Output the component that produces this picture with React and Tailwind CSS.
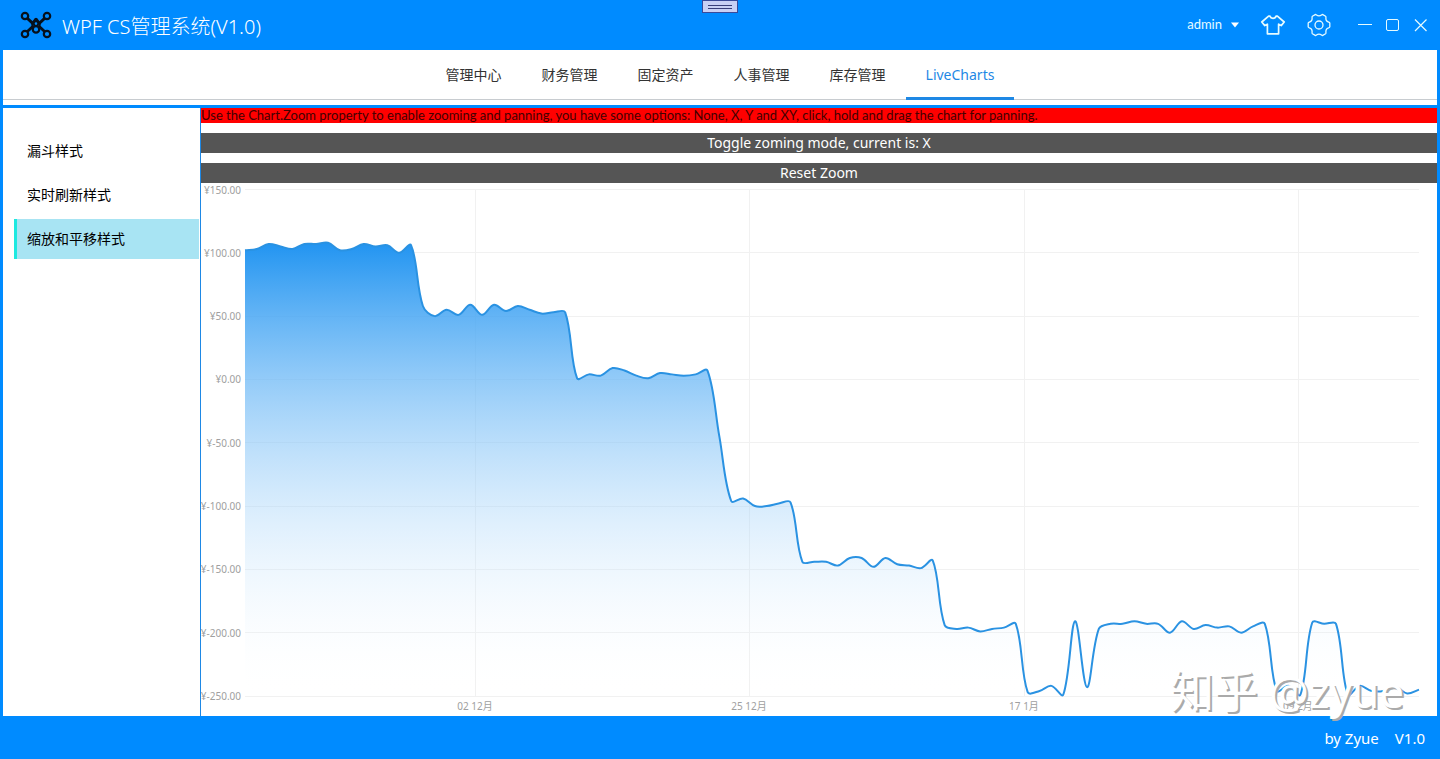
const navItems = ['管理中心', '财务管理', '固定资产', '人事管理', '库存管理', 'LiveCharts']

const sideItems = ['漏斗样式', '实时刷新样式', '缩放和平移样式']

const values = [
  102, 103, 107, 105, 103, 107, 107, 108, 102, 103, 107, 105, 106, 100, 106,
  58, 50, 55, 51, 59, 51, 59, 54, 58, 55, 52, 53, 53, 1, 4, 3, 9, 7, 3, 1, 5,
  4, 3, 4, 7, -45, -96, -94, -100, -100, -98, -97, -144, -144, -144, -147,
  -141, -141, -148, -141, -146, -147, -149, -143, -194, -197, -196, -199, -197,
  -196, -193, -247, -246, -242, -249, -191, -243, -197, -193, -193, -191, -193,
  -193, -200, -191, -197, -194, -196, -195, -200, -195, -193, -246, -242, -249,
  -192, -193, -193, -249, -242, -246, -246, -243, -248, -245,
]

const yTicks = [150, 100, 50, 0, -50, -100, -150, -200, -250]

const xTicks = [
  { x: 274, label: '02 12月' },
  { x: 548, label: '25 12月' },
  { x: 823, label: '17 1月' },
  { x: 1097, label: '09 2月' },
]

const plot = { left: 44, right: 1218, top: 6.5, bottom: 513 }
const smoothness = 0.7

const scaleX = (index) =>
  plot.left + (index * (plot.right - plot.left)) / (values.length - 1)

const scaleY = (value) =>
  plot.top + ((150 - value) * (plot.bottom - plot.top)) / 400

// Control points on both sides of p1, weighted by the segment lengths
function getControls(p0, p1, p2) {
  const c1 = [(p0[0] + p1[0]) / 2, (p0[1] + p1[1]) / 2]
  const c2 = [(p1[0] + p2[0]) / 2, (p1[1] + p2[1]) / 2]
  const len1 = Math.hypot(p1[0] - p0[0], p1[1] - p0[1])
  const len2 = Math.hypot(p2[0] - p1[0], p2[1] - p1[1])
  const k = len1 + len2 === 0 ? 0 : len1 / (len1 + len2)
  const mid = [c1[0] + (c2[0] - c1[0]) * k, c1[1] + (c2[1] - c1[1]) * k]

  return {
    before: [0, 1].map((a) => p1[a] + (c1[a] - mid[a]) * smoothness),
    after: [0, 1].map((a) => p1[a] + (c2[a] - mid[a]) * smoothness),
  }
}

function buildLine() {
  const points = values.map((value, index) => [scaleX(index), scaleY(value)])
  const controls = points.map((point, index) =>
    getControls(points[index - 1] ?? point, point, points[index + 1] ?? point)
  )

  return points
    .map((point, index) => {
      if (index === 0) {
        return `M${point.join(' ')}`
      }

      const { after } = controls[index - 1]
      const { before } = controls[index]
      return `C${after.join(' ')} ${before.join(' ')} ${point.join(' ')}`
    })
    .join('')
}

const linePath = buildLine()
const areaPath = `${linePath}V${plot.bottom}H${plot.left}Z`

function Logo() {
  return (
    <svg viewBox="0 0 32 28" className="h-7 w-8 shrink-0" fill="none" stroke="#06101c" strokeWidth="2.2">
      <circle cx="5" cy="5" r="3.2" />
      <circle cx="27" cy="5" r="3.2" />
      <circle cx="5" cy="23" r="3.2" />
      <circle cx="27" cy="23" r="3.2" />
      <path d="M7.4 7.4 13 12.6M24.6 7.4 19 12.6M7.4 20.6 13 15.2M24.6 20.6 19 15.2" strokeWidth="2.8" />
      <path d="M16 7.4 12.2 12.4 12.8 15.6M16 7.4 19.8 12.4 19.2 15.6" strokeLinejoin="round" />
      <circle cx="16" cy="12.6" r="2.2" strokeWidth="1.8" />
      <circle cx="16" cy="18.4" r="3.2" />
    </svg>
  )
}

function ShirtIcon() {
  return (
    <svg viewBox="0 0 26 22" className="h-[22px] w-[26px]" fill="none" stroke="currentColor" strokeWidth="1.7" strokeLinejoin="round">
      <path d="M8.6 2.2 1.8 8 4.8 11.6 7.4 10.2V19.8H18.6V10.2L21.2 11.6 24.2 8 17.4 2.2H16C15.2 5 10.8 5 10 2.2Z" />
    </svg>
  )
}

function GearIcon() {
  return (
    <svg viewBox="0 0 24 24" className="size-6" fill="none" stroke="currentColor" strokeWidth="1.3" strokeLinejoin="round">
      <path d="M8.2 1.6C9.2 1 9.6 2.9 12 2.9S14.8 1 15.8 1.6L18.6 3.2C19.6 3.9 18.2 5.2 19.3 7.4S22.6 8.8 22.8 10V14C22.6 15.2 20.4 14.5 19.3 16.6S19.6 20.1 18.6 20.8L15.8 22.4C14.8 23 14.4 21.1 12 21.1S9.2 23 8.2 22.4L5.4 20.8C4.4 20.1 5.8 18.8 4.7 16.6S1.4 15.2 1.2 14V10C1.4 8.8 3.6 9.5 4.7 7.4S4.4 3.9 5.4 3.2Z" />
      <circle cx="12" cy="12" r="4" />
    </svg>
  )
}

function TitleBar() {
  return (
    <header className="relative flex h-[50px] items-center justify-between pr-[11px] pl-5 text-white">
      <div className="flex items-center gap-2.5">
        <Logo />
        <h1 className="pt-1 text-xl font-light">WPF CS管理系统(V1.0)</h1>
      </div>

      <div className="absolute top-0 left-1/2 flex h-[13px] w-9 -translate-x-1/2 flex-col justify-center gap-[2px] border border-[#3a4a9a] bg-[#c9d0f5] px-[5px]">
        <span className="h-px bg-[#3a3f7a]" />
        <span className="h-px bg-[#3a3f7a]" />
      </div>

      <div className="flex items-center text-[#e6fbff]">
        <button type="button" className="flex items-center gap-2 font-['Lato',sans-serif] text-[13px]">
          admin
          <svg viewBox="0 0 10 6" className="h-1.5 w-2.5" fill="#fff">
            <path d="M1 .5H9L5 5.5Z" />
          </svg>
        </button>
        <button type="button" aria-label="Theme" className="ml-5">
          <ShirtIcon />
        </button>
        <button type="button" aria-label="Settings" className="ml-[21px]">
          <GearIcon />
        </button>
        <div className="ml-[26px] flex gap-3">
          <button type="button" aria-label="Minimize">
            <svg viewBox="0 0 16 16" className="size-4" stroke="currentColor">
              <path d="M1 7.5H15" />
            </svg>
          </button>
          <button type="button" aria-label="Maximize">
            <svg viewBox="0 0 16 16" className="size-4" fill="none" stroke="currentColor">
              <rect x="1.5" y="2.5" width="12" height="11" rx="1.5" />
            </svg>
          </button>
          <button type="button" aria-label="Close">
            <svg viewBox="0 0 16 16" className="size-4" stroke="currentColor" strokeWidth="1.2">
              <path d="M2 2.5 13.5 14M13.5 2.5 2 14" />
            </svg>
          </button>
        </div>
      </div>
    </header>
  )
}

function NavBar() {
  return (
    <nav className="h-[55px] bg-white">
      <div className="flex h-[50px] justify-center border-b border-[#c8ccd0]">
        {navItems.map((item) => (
          <button
            key={item}
            type="button"
            className={`-mb-px h-[50px] border-b-3 px-5 pt-0.5 text-sm ${
              item === 'LiveCharts'
                ? 'border-[#1e88e5] text-[#1e88e5]'
                : 'border-transparent text-[#333]'
            }`}
          >
            {item}
          </button>
        ))}
      </div>
    </nav>
  )
}

function Sidebar() {
  return (
    <aside className="w-[198px] shrink-0 border-r border-[#1e88e5] pt-[23px] pr-px pl-[11px]">
      {sideItems.map((item, index) => (
        <button
          key={item}
          type="button"
          className={`mb-1 flex h-10 w-full items-center border-l-3 pl-2.5 text-sm text-black ${
            index === 2 ? 'border-[#1de9e0] bg-[#a8e4f3]' : 'border-transparent'
          }`}
        >
          {item}
        </button>
      ))}
    </aside>
  )
}

function Chart() {
  return (
    <svg viewBox="0 0 1236 533" className="block w-full">
      <defs>
        <linearGradient id="area" x1="0" y1="0" x2="0" y2="1">
          <stop offset="0" stopColor="#2194f1" />
          <stop offset="1" stopColor="#fff" stopOpacity="0" />
        </linearGradient>
      </defs>
      <g stroke="#f1f1f1">
        {yTicks.map((tick) => (
          <path key={tick} d={`M${plot.left} ${Math.floor(scaleY(tick)) + 0.5}H${plot.right}`} />
        ))}
        {xTicks.map((tick) => (
          <path key={tick.x} d={`M${tick.x + 0.5} ${plot.top}V${plot.bottom}`} />
        ))}
      </g>
      <path d={areaPath} fill="url(#area)" />
      <path d={linePath} fill="none" stroke="#2a92e2" strokeWidth="2" />
      <g className="fill-[#a0a0a0] text-[10px]">
        {yTicks.map((tick) => (
          <text key={tick} x="40" y={scaleY(tick) + 4} textAnchor="end">
            ¥{tick.toFixed(2)}
          </text>
        ))}
        {xTicks.map((tick) => (
          <text key={tick.x} x={tick.x} y="527" textAnchor="middle">
            {tick.label}
          </text>
        ))}
      </g>
    </svg>
  )
}

export default function App() {
  return (
    <div className="relative flex min-h-screen flex-col bg-[#008bff] font-['Noto_Sans','Noto_Sans_CJK_SC',sans-serif]">
      <TitleBar />
      <div className="mx-[3px] flex flex-1 flex-col">
        <NavBar />
        <div className="mt-[3px] flex flex-1 bg-white">
          <Sidebar />
          <main className="min-w-0 flex-1">
            <p className="h-[15px] bg-[#ff0000] font-['Lato',sans-serif] text-[13px] leading-[15px] text-[#400]">
              Use the Chart.Zoom property to enable zooming and panning, you have some options: None, X, Y and XY, click, hold and drag the chart for panning.
            </p>
            <button type="button" className="mt-2.5 block h-5 w-full bg-[#555] text-sm text-white">
              Toggle zoming mode, current is: X
            </button>
            <button type="button" className="mt-2.5 block h-5 w-full bg-[#555] text-sm text-white">
              Reset Zoom
            </button>
            <Chart />
          </main>
        </div>
      </div>
      <footer className="flex h-[43px] items-center justify-end gap-4 pt-0.5 pr-[15px] text-[15px] text-white">
        <span>by Zyue</span>
        <span>V1.0</span>
      </footer>
      <div className="pointer-events-none absolute right-9 bottom-[38px] text-[44px] leading-[60px] text-white [text-shadow:2px_2px_0_#aaa]">
        知乎 @zyue
      </div>
    </div>
  )
}
